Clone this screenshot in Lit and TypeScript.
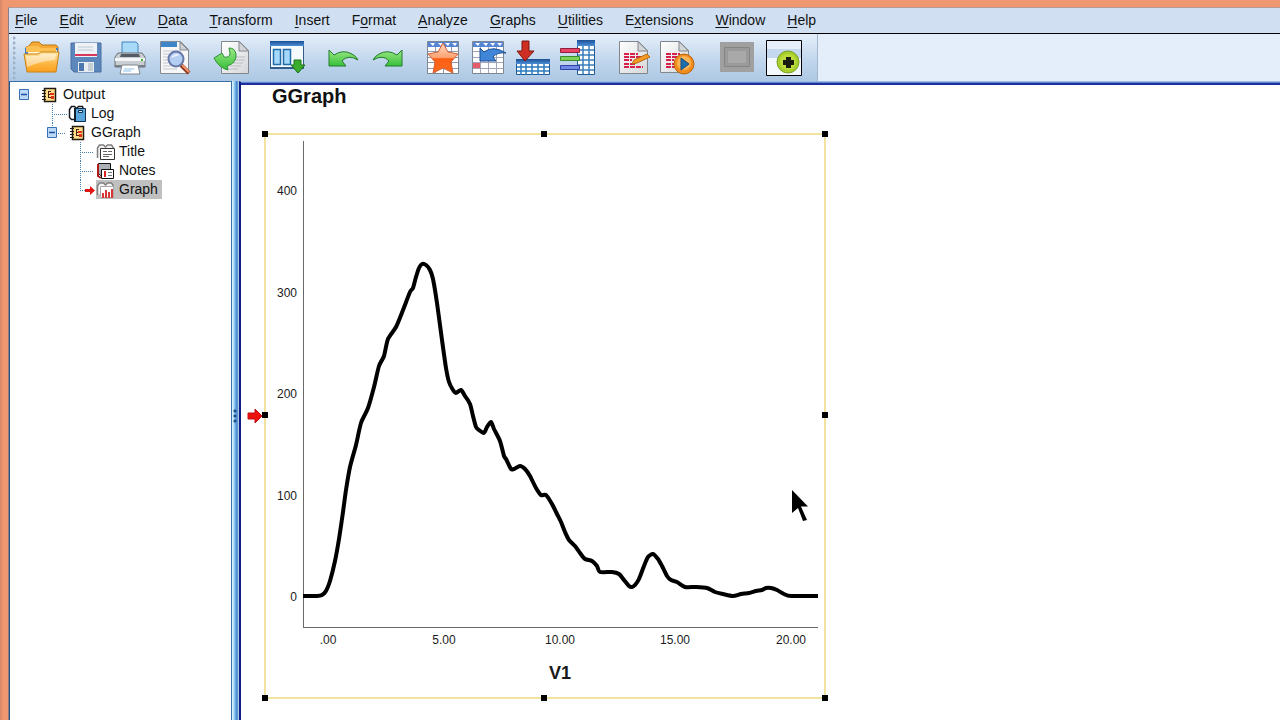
import { LitElement, html, svg, css, nothing } from "lit";
import { customElement, property, state } from "lit/decorators.js";
import { classMap } from "lit/directives/class-map.js";

const toolIcons = {
  open: svg`
    <path d="M3 11 V7 l3-1 3-4 h7 l3 3 h14 l2 2 v7z" fill="#f6a935" stroke="#b87514"/>
    <path d="M2 8 h33 v6 h-33z" fill="#3f7fc8"/>
    <path d="M5 10 h29 v8 h-29z" fill="#fff3d8"/>
    <path d="M3 12 V7 l3-1 h9 l3 2 h15 v4z" fill="#fbbf52"/>
    <path d="M1 14 h14 l3-2 h18 l-3 20 h-29z" fill="url(#gold)" stroke="#c98315"/>
    <path d="M3 16 h12 l4-2 h14 l-1 6 q-14 1-28 7z" fill="#fff" opacity=".45"/>`,
  save: svg`
    <path d="M3 3 h30 v29 h-27 l-3-3z" fill="#5c87bd" stroke="#4a6f9f"/>
    <path d="M7 3 h22 v14 h-22z" fill="#eef2f6"/>
    <path d="M10 7 h15 M10 10 h15" stroke="#bcc8d4"/>
    <path d="M7 14 h22 v2 h-22z" fill="#d8365a"/>
    <path d="M10 22 h16 v10 h-16z" fill="#e9edf2"/>
    <path d="M11 23 h5 v8 h-5z" fill="#4c78ad"/>
    <path d="M20 23 h5 v8 h-5z" fill="#c4ccd4"/>`,
  print: svg`
    <path d="M9 16 V2 h14 l2 2 v12z" fill="#a9d9f8" stroke="#3f86c0"/>
    <path d="M5 13 h24 l3 4 v10 h-30 v-10z" fill="#c9ced3" stroke="#686e75"/>
    <path d="M8 14 h18 l1 3 h-20z" fill="#555c64"/>
    <path d="M2 18 h30 v3 h-30z" fill="#f4f6f8"/>
    <path d="M2 25 h30 v2 h-30z" fill="#787f87"/>
    <path d="M28 19 h2 v2 h-2z" fill="#42b030"/>
    <path d="M9 25 h16 l2 9 h-20z" fill="#fff" stroke="#80878f"/>
    <path d="M11 29 h10 M10 31 h8" stroke="#8fc0e6"/>`,
  preview: svg`
    <path d="M2.500 1.500 h20 l8 8 v24 h-28z" fill="#f7f7f7" stroke="#868b91"/>
    <path d="M3 2 h16 v5 h-16z" fill="#3f86c8"/>
    <path d="M22 2 v8 h8z" fill="#cdd0d4" stroke="#868b91"/>
    <path d="M5 11 h18 M5 14 h10 M5 17 h6 M5 20 h5 M5 23 h5 M5 26 h8 M5 29 h14" stroke="#c3c8cd"/>
    <path d="M23 25 l8 8" stroke="#8d3a20" stroke-width="4"/>
    <path d="M24 25 l7 7" stroke="#f0936a" stroke-width="2"/>
    <circle cx="18" cy="19" r="7.500" fill="#b4cdf2" stroke="#6878a8" stroke-width="2"/>
    <path d="M13 18 a6 6 0 0 1 9-3z" fill="#fff" opacity=".7"/>`,
  exporting: svg`
    <path d="M7.500 1.500 h18 l9 9 v23 h-27z" fill="url(#paper)" stroke="#83878c"/>
    <path d="M25 1.500 v9.500 h9.500z" fill="#d3d5d8" stroke="#83878c"/>
    <path d="M17 17 h14 M17 20 h14 M17 23 h12 M14 26 h13 M12 29 h12" stroke="#b9bdc1"/>
    <path d="M0 18 L8 13 l2 4 q6 1 6-4 l-1-5 q6 0 7 6 q1 9-9 12 l1 4 q-9-2-14-12z" fill="url(#leaf)" stroke="#2f9136"/>`,
  recall: svg`
    <path d="M.5 1.500 h33 v27 h-33z" fill="#f5faff" stroke="#335d8c"/>
    <path d="M0 1 h34 v5 h-34z" fill="url(#navy)"/>
    <path d="M0 28 h34" stroke="#335d8c" stroke-width="2"/>
    <path d="M3.500 9.500 h7 v15 h-7z M13.500 9.500 h7 v15 h-7z" fill="#a5d8fa" stroke="#206ca8" stroke-width="1.500"/>
    <path d="M24 20 h7 v5 h4 l-7 8 -7-8 h3z" fill="#3aae2c" stroke="#1c701a"/>`,
  undo: svg`
    <path d="M4 10 l5 5 q9-6 18-1 q4 2 6 6 q-10-6-16 1 l4 5 h-17z" fill="url(#leaf)" stroke="#237a2c"/>`,
  redo: svg`
    <path d="M32 10 l-5 5 q-9-6-18-1 q-4 2-6 6 q10-6 16 1 l-4 5 h17z" fill="url(#leaf)" stroke="#237a2c"/>`,
  star: svg`
    <path d="M2.500 1.500 h31 v32 h-31z" fill="#fff" stroke="#7d8790"/>
    <path d="M3 2 h30 v5 h-30z" fill="#5685d4"/>
    <path d="M5 3 h5 l-2 3z M13 3 h5 l-2 3z M20 3 h5 l-2 3z M27 3 h5 l-2 3z" fill="#fff"/>
    <path d="M10.500 7 v26 M18.500 7 v26 M26.500 7 v26 M3 11.500 h30 M3 17.500 h30 M3 22.500 h30 M3 28.500 h30" stroke="#9098b0"/>
    <path d="M18 3 l5 9 10 2 -7 8 2 11 -10-5 -10 5 2-11 -7-8 10-2z" fill="url(#ember)" stroke="#d0613a"/>`,
  goto: svg`
    <path d="M2.500 1.500 h31 v32 h-31z" fill="#fff" stroke="#7d8790"/>
    <path d="M3 2 h30 v5 h-30z" fill="#5685d4"/>
    <path d="M5 3 h5 l-2 3z M13 3 h5 l-2 3z M20 3 h5 l-2 3z M27 3 h5 l-2 3z" fill="#fff"/>
    <path d="M10.500 7 v26 M18.500 7 v26 M26.500 7 v26 M3 11.500 h30 M3 17.500 h30 M3 22.500 h30 M3 28.500 h30" stroke="#a3a6ba"/>
    <path d="M3 23 h7 v5 h-7z" fill="#e65a6a"/>
    <path d="M10 8 l4 4 q9-7 22 1 q-9-1-13 4 l3 4 h-16z" fill="#3f86d8" stroke="#1f4f93"/>`,
  insertCase: svg`
    <path d="M1.500 19.500 h33 v15 h-33z" fill="#fff" stroke="#1f5c96"/>
    <path d="M1 19 h34 v5 h-34z" fill="url(#navy)"/>
    <path d="M6 24 v11 M11 24 v11 M17 24 v11 M23 24 v11 M29 24 v11 M2 27 h32 M2 31 h32" stroke="#2c7bc0" stroke-width="1.500"/>
    <path d="M7 1 h7 v10 h5 l-9 10 -8-10 h5z" fill="#cf2e22" stroke="#7d1612"/>`,
  insertVar: svg`
    <path d="M17.500 .5 h17 v34 h-17z" fill="#fff" stroke="#1f5c96"/>
    <path d="M17 0 h18 v6 h-18z" fill="url(#navy)"/>
    <path d="M23 6 v28 M29 6 v28 M18 10 h16 M18 15 h16 M18 20 h16 M18 25 h16 M18 30 h16" stroke="#3d7fbd" stroke-width="1.500"/>
    <path d="M.5 8.500 h19 v4 h-19z" fill="#ea4468" stroke="#8f2038"/>
    <path d="M.5 16.500 h19 v4 h-19z" fill="#7bd256" stroke="#3b8c2d"/>
    <path d="M.5 25.500 h19 v4 h-19z" fill="#7089e6" stroke="#2e429f"/>`,
  editDoc: svg`
    <path d="M3.500 1.500 h19 l9 9 v23 h-28z" fill="url(#paper)" stroke="#83878c"/>
    <path d="M22 1.500 v9.500 h9.500z" fill="#d3d5d8" stroke="#83878c"/>
    <path d="M8 14 h14 M8 17 h17 M8 20 h8 M8 24 h12 M8 27 h19" stroke="#d6214b" stroke-width="2" stroke-dasharray="5 1"/>
    <path d="M16 24 l2-4 13-6 3 3 -13 6z" fill="#f59a22" stroke="#b8690e"/>`,
  runDoc: svg`
    <path d="M-.5 1.500 h19 l9 9 v22 h-28z" fill="url(#paper)" stroke="#83878c"/>
    <path d="M18 1.500 v9.500 h9.500z" fill="#d3d5d8" stroke="#83878c"/>
    <path d="M5 14 h14 M5 17 h11 M5 20 h8 M5 24 h8 M5 27 h9" stroke="#d6214b" stroke-width="2" stroke-dasharray="5 1"/>
    <circle cx="23" cy="24" r="10" fill="#f28c1c" stroke="#b9650c"/>
    <circle cx="23" cy="23" r="7" fill="#f9b457"/>
    <path d="M20 18 l8 6 -8 6z" fill="#1d6fae" stroke="#134a78"/>`,
  designate: svg`
    <path d="M1 2 h34 v30 h-34z" fill="#a0a0a0"/>
    <path d="M5.500 7.500 h25 v19 h-25z" fill="#9a9a9a" stroke="#858585"/>
    <path d="M9 11 h18 v12 h-18z" fill="#a9a9a9"/>`,
  addNew: svg`
    <path d="M.5.5 h35 v35 h-35z" fill="#f4f9ff" stroke="#000"/>
    <path d="M1 1 h34 v8 h-34z" fill="#e6effa"/>
    <path d="M1 9 h34 v9 h-34z" fill="#c4d8ef"/>
    <circle cx="22" cy="22" r="11" fill="#a6ce2c" stroke="#7d9f2b"/>
    <circle cx="22" cy="22" r="8" fill="#bcdc3c"/>
    <path d="M20 17 h5 v3 h3 v5 h-3 v3 h-5 v-3 h-3 v-5 h3z" fill="#1a1c10"/>`,
};

const treeIcons = {
  book: svg`
    <path d="M4.500 2.500 h11 v13 h-11z" fill="#ffe08a" stroke="#221a10" stroke-width="1.500"/>
    <path d="M2 4.500 h4 M2 7.500 h4 M2 10.500 h4 M2 13.500 h4" stroke="#221a10"/>
    <path d="M8.500 5 v7 M8 5.500 h3 M8 8.500 h3 M8 11.500 h3" stroke="#4b1c10" fill="none"/>
    <path d="M10 7 h4 v2 h-4z M11 10 h3 v3 h-3z" fill="#e03018"/>`,
  log: svg`
    <path d="M1.500 4.500 l2-3 h3 l2 2 2-2 h4 l1 3 v10 h-12 l-2-2z" fill="#fff" stroke="#151a20" stroke-width="1.500"/>
    <path d="M7.500 3.500 h10 v13 h-10z" fill="#5aa7de" stroke="#12304c"/>
    <path d="M7 3 v14" stroke="#12202c" stroke-width="2"/>
    <path d="M10.500 5.500 h4 v2 h-4z" fill="#d5efff" stroke="#12304c"/>`,
  title: svg`
    <path d="M1.500 15 v-10 l2-3 h4 l2 2 2-2 h4 l2 3" fill="#f2f2f2" stroke="#808080" stroke-width="1.500"/>
    <path d="M4.500 5.500 h14 v11 h-14z" fill="#fff" stroke="#333"/>
    <path d="M7 8.500 h4 M12 8.500 h4 M7 11.500 h9 M7 13.500 h6" stroke="#666"/>`,
  notes: svg`
    <path d="M2.500 1.500 h12 v12 h-10 l-2-2z" fill="#aab0b6" stroke="#111"/>
    <path d="M2 2 v12 l3 2" stroke="#b01c1c" stroke-width="2" fill="none"/>
    <path d="M5.500 7.500 h12 v9 h-12z" fill="#fff" stroke="#111"/>
    <path d="M12 10.500 h4 M12 13.500 h4" stroke="#777"/>
    <path d="M8 9 h2 v6 h-2z" fill="#e02020"/>`,
  graph: svg`
    <path d="M1.500 14 v-9 l2-3 h4 l2 2 2-2 h4 l2 3" fill="#f5f5f5" stroke="#808080" stroke-width="1.500"/>
    <path d="M4.500 5.500 h13 v11 h-13z" fill="#fff" stroke="#aaa"/>
    <path d="M6 12 h2 v5 h-2z M9 9 h2 v8 h-2z M12 11 h2 v6 h-2z M15 8 h2 v9 h-2z" fill="#d63636"/>`,
};

type ToolName = keyof typeof toolIcons;
type TreeName = keyof typeof treeIcons;

interface ToolGroup {
  kind: string;
  tools: [ToolName, string][];
}

const toolGroups: ToolGroup[] = [
  { kind: "first", tools: [["open", "Open"], ["save", "Save"], ["print", "Print"], ["preview", "Print preview"]] },
  { kind: "", tools: [["exporting", "Export"]] },
  { kind: "", tools: [["recall", "Recall dialog"]] },
  { kind: "near", tools: [["undo", "Undo"], ["redo", "Redo"]] },
  { kind: "near", tools: [["star", "Go to data"], ["goto", "Go to case"], ["insertCase", "Insert case"], ["insertVar", "Insert variable"]] },
  { kind: "", tools: [["editDoc", "Edit script"], ["runDoc", "Run script"]] },
  { kind: "loose", tools: [["designate", "Designate window"], ["addNew", "Add"]] },
];

@customElement("tool-bar")
export class ToolBar extends LitElement {
  static styles = css`
    :host { display: flex; height: 47px; background: #e3eefa; }
    .strip {
      display: flex; align-items: center; padding-right: 15px;
      background: linear-gradient(#e4eefa, #bfd5ec 60%, #adc8e4);
      border-right: 1px solid #a3b8cf;
    }
    .grip {
      width: 3px; height: 43px; margin: 0 7px 0 4px;
      background: radial-gradient(circle at 1px 2px, #9fb1c6 1px, transparent 2px) 0 0 / 3px 5px;
    }
    .group { display: flex; gap: 9px; margin-left: 20px; }
    .first { margin-left: 0; }
    .near { margin-left: 19px; }
    .loose { gap: 11px; margin-left: 22px; }
    .tool { display: block; width: 36px; height: 36px; padding: 0; border: 0; background: none; }
    .icon { display: block; width: 36px; height: 36px; overflow: visible; }
  `;

  private gradients() {
    return svg`
      <linearGradient id="gold" x2="0" y2="1"><stop stop-color="#ffe7a6"/><stop offset=".6" stop-color="#fdb540"/><stop offset="1" stop-color="#f8a01e"/></linearGradient>
      <linearGradient id="paper" x2="1" y2="1"><stop stop-color="#fff"/><stop offset="1" stop-color="#d4d6d9"/></linearGradient>
      <linearGradient id="leaf" x2="0" y2="1"><stop stop-color="#9be884"/><stop offset="1" stop-color="#37c03a"/></linearGradient>
      <linearGradient id="navy" x2="0" y2="1"><stop stop-color="#1c4f94"/><stop offset="1" stop-color="#4b8fd6"/></linearGradient>
      <linearGradient id="ember" x2="0" y2="1"><stop stop-color="#ffd9c0"/><stop offset=".5" stop-color="#ffa070"/><stop offset=".52" stop-color="#fb5f14"/><stop offset="1" stop-color="#fb6a1c"/></linearGradient>`;
  }

  render() {
    return html`
      <div class="strip" role="toolbar" aria-label="Output tools">
        <span class="grip"></span>
        ${toolGroups.map(
          (group) => html`<div class=${`group ${group.kind}`}>
            ${group.tools.map(
              ([name, label]) => html`<button class="tool" aria-label=${label}>
                <svg class="icon" viewBox="0 0 36 36" aria-hidden="true">
                  <defs>${this.gradients()}</defs>
                  ${toolIcons[name]}
                </svg>
              </button>`
            )}
          </div>`
        )}
      </div>
    `;
  }
}

interface Row {
  label: string;
  icon: TreeName;
  level: number;
  branch: boolean;
  last: boolean;
}

const rows: Row[] = [
  { label: "Output", icon: "book", level: 0, branch: true, last: true },
  { label: "Log", icon: "log", level: 1, branch: false, last: false },
  { label: "GGraph", icon: "book", level: 1, branch: true, last: true },
  { label: "Title", icon: "title", level: 2, branch: false, last: false },
  { label: "Notes", icon: "notes", level: 2, branch: false, last: false },
  { label: "Graph", icon: "graph", level: 2, branch: false, last: true },
];

@customElement("outline-tree")
export class OutlineTree extends LitElement {
  static styles = css`
    :host { display: block; padding-top: 3px; color: #111; }
    .rows { margin: 0; padding: 0; list-style: none; }
    .row { display: flex; height: 19px; }
    .indent { width: 28px; }
    .joint { display: block; width: 30px; height: 19px; overflow: visible; }
    .item {
      display: flex; align-items: center; gap: 3px; height: 19px; padding: 0 4px 0 0;
      border: 0; background: none; color: inherit; font: 14px/19px "Liberation Sans", Arial, sans-serif;
    }
    .selected { background: #c0c0c0; }
    .icon { display: block; width: 20px; height: 18px; }
  `;

  @state() private selected = "Graph";

  private joint(row: Row, active: boolean) {
    return svg`
      ${row.level > 0
        ? svg`<path d=${`M14.5 0 V${row.last ? 10 : 19} M14 10.500 H${row.level === 1 && !row.branch ? 30 : 28}`}
            stroke="#4682b4" stroke-dasharray="1 1" fill="none"/>`
        : nothing}
      ${row.branch
        ? svg`<path d="M9.500 4.500 h9 v10 h-9z" fill="#bcd9f7" stroke="#3670b4"/><path d="M11 9.500 h6" stroke="#1c5098" stroke-width="1.500"/>`
        : nothing}
      ${active ? svg`<path d="M19 9 h5 v-3 l5 4.500 -5 4.500 v-3 h-5z" fill="#e01414"/>` : nothing}`;
  }

  render() {
    return html`<ul class="rows" role="tree" aria-label="Output outline">
      ${rows.map((row) => {
        const active = row.label === this.selected;
        return html`<li class="row" role="treeitem" aria-selected=${active}>
          ${Array.from({ length: row.level }, () => html`<span class="indent"></span>`)}
          <svg class="joint" viewBox="0 0 30 19" aria-hidden="true">${this.joint(row, active)}</svg>
          <button class=${classMap({ item: true, selected: active })} @click=${() => (this.selected = row.label)}>
            <svg class="icon" viewBox="0 0 20 18" aria-hidden="true">${treeIcons[row.icon]}</svg>${row.label}
          </button>
        </li>`;
      })}
    </ul>`;
  }
}

const curve: [number, number][] = [
  [37, 461], [51, 461], [56, 460], [60, 456], [64, 446], [69, 426], [73, 404], [77, 377], [80, 355], [84, 332],
  [90, 310], [95, 288], [102, 273], [108, 252], [113, 231], [118, 221], [122, 204], [130, 192], [137, 175],
  [144, 157], [147, 153], [150, 142], [153, 133], [156, 129], [160, 130], [164, 135], [167, 144], [171, 168],
  [176, 205], [180, 233], [183, 247], [187, 255], [190, 258], [195, 255], [199, 261], [204, 269], [207, 281],
  [210, 292], [213, 295], [218, 298], [221, 292], [225, 287], [228, 294], [234, 306], [238, 321], [240, 324],
  [245, 334], [248, 334], [254, 331], [259, 334], [264, 341], [270, 353], [275, 360], [280, 360], [286, 369],
  [291, 379], [295, 387], [299, 397], [303, 405], [309, 411], [314, 418], [319, 424], [326, 426], [331, 431],
  [334, 437], [346, 437], [353, 439], [358, 445], [363, 451], [366, 452], [369, 450], [373, 444], [378, 431],
  [382, 422], [387, 419], [392, 424], [396, 431], [401, 441], [405, 445], [411, 447], [419, 452], [430, 452],
  [441, 453], [449, 457], [457, 459], [467, 461], [475, 459], [483, 458], [490, 456], [496, 455], [500, 453],
  [505, 453], [511, 455], [518, 459], [525, 461], [552, 461],
];

function smoothPath(points: [number, number][]): string {
  let d = `M${points[0][0]} ${points[0][1]}`;
  for (let i = 0; i < points.length - 1; i++) {
    const before = points[Math.max(i - 1, 0)];
    const from = points[i];
    const to = points[i + 1];
    const after = points[Math.min(i + 2, points.length - 1)];
    const tension = 8;
    d += ` C${from[0] + (to[0] - before[0]) / tension} ${from[1] + (to[1] - before[1]) / tension}`;
    d += ` ${to[0] - (after[0] - from[0]) / tension} ${to[1] - (after[1] - from[1]) / tension} ${to[0]} ${to[1]}`;
  }
  return d;
}

@customElement("density-chart")
export class DensityChart extends LitElement {
  static styles = css`
    :host { display: block; position: relative; border: 2px solid #f3e3a0; }
    .plot { display: block; width: 558px; height: 562px; }
    .tick { font: 12px "Liberation Sans", Arial, sans-serif; fill: #1a1a1a; }
    .end { text-anchor: end; }
    .mid { text-anchor: middle; }
    .name { font: bold 18px "Liberation Sans", Arial, sans-serif; fill: #1a1a1a; }
    .axis { stroke: #6a6a6a; shape-rendering: crispEdges; }
    .line { fill: none; stroke: #000; stroke-width: 4; stroke-linejoin: round; }
    .handle { position: absolute; width: 6px; height: 6px; margin: -4px; background: #000; }
    .top { top: 0; }
    .middle { top: 50%; }
    .bottom { bottom: 0; }
    .left { left: 0; }
    .center { left: 50%; }
    .right { right: 0; }
  `;

  @property() name = "V1";

  render() {
    const ticksY = ["0", "100", "200", "300", "400"];
    const ticksX = [".00", "5.00", "10.00", "15.00", "20.00"];
    const handles = ["top left", "top center", "top right", "middle left", "middle right", "bottom left", "bottom center", "bottom right"];
    return html`
      <svg class="plot" viewBox="0 0 558 562" role="img" aria-label="Distribution of V1">
        <path class="axis" d="M37.500 6 V492.500 H552" fill="none"/>
        ${ticksY.map((label, i) => svg`<text class="tick end" x="31" y=${Math.round(466 - i * 101.5)}>${label}</text>`)}
        ${ticksX.map((label, i) => svg`<text class="tick mid" x=${Math.round(62 + i * 115.75)} y="509">${label}</text>`)}
        <path class="line" d=${smoothPath(curve)}/>
        <text class="name mid" x="294" y="544">${this.name}</text>
      </svg>
      ${handles.map((place) => html`<span class=${`handle ${place}`}></span>`)}
    `;
  }
}

const menus: [string, string, string][] = [
  ["", "F", "ile"], ["", "E", "dit"], ["", "V", "iew"], ["", "D", "ata"], ["", "T", "ransform"], ["", "I", "nsert"],
  ["F", "o", "rmat"], ["", "A", "nalyze"], ["", "G", "raphs"], ["", "U", "tilities"], ["E", "x", "tensions"],
  ["", "W", "indow"], ["", "H", "elp"],
];

@customElement("app-root")
export class AppRoot extends LitElement {
  static styles = css`
    :host {
      display: flex; flex-direction: column; box-sizing: border-box; height: 100vh; overflow: hidden;
      padding: 7px 0 0 8px; background: linear-gradient(90deg, #d88a6a 1px, #ee9770 3px);
      font-family: "Liberation Sans", Arial, sans-serif;
    }
    .window { display: flex; flex-direction: column; flex: 1; min-height: 0; border-left: 1px solid #8d7f86; border-top: 1px solid #b99a92; }
    .menus { display: flex; gap: 22px; padding-left: 6px; height: 25px; background: #d0e0f2; border-bottom: 1px solid #000; }
    .menu { padding: 0; border: 0; background: none; color: #111; font: 14px/25px "Liberation Sans", Arial, sans-serif; }
    .key { text-decoration: underline; text-underline-offset: 2px; }
    .panes { display: flex; flex: 1; min-height: 0; background: #fff; }
    .outline { flex: 0 0 221px; border: 1px solid #3b6fa8; border-left-color: #2c4f7c; border-bottom: 0; }
    .splitter {
      display: flex; align-items: center; flex: 0 0 7px;
      background: linear-gradient(90deg, #d4f0fb 1px, #9cd0f2 2px, #5c9fdc 4px, #3f7fc6 5px, #cfe0f4 7px);
    }
    .dots { width: 5px; height: 16px; margin-top: 30px; background: radial-gradient(circle at 3px 3px, #1f4f86 1px, transparent 2px) 0 0 / 5px 5px; }
    .output { flex: 1; min-width: 0; overflow: hidden; border-left: 2px solid #0e1c86; border-top: 1px solid #9dbbe2; box-shadow: inset 0 1px #5f86cf, inset 0 3px #1c2f9c; }
    .heading { margin: 0; padding: 3px 0 0 31px; font-size: 20px; line-height: 22px; color: #111; }
    .result { display: flex; align-items: center; gap: 1px; padding: 26px 0 0 6px; }
    .marker { display: block; width: 16px; height: 16px; }
    .pointer { position: absolute; left: 791px; top: 490px; width: 18px; height: 34px; }
  `;

  render() {
    return html`
      <div class="window">
        <nav class="menus" aria-label="Main menu">
          ${menus.map(([before, key, after]) => html`<button class="menu">${before}<span class="key">${key}</span>${after}</button>`)}
        </nav>
        <tool-bar></tool-bar>
        <main class="panes">
          <aside class="outline"><outline-tree></outline-tree></aside>
          <div class="splitter"><span class="dots"></span></div>
          <section class="output">
            <h1 class="heading">GGraph</h1>
            <div class="result">
              <svg class="marker" viewBox="0 0 16 16" aria-hidden="true"><path d="M1 5 h7 v-4 l7 7 -7 7 v-4 h-7z" fill="#ee0f0f" stroke="#c01010"/></svg>
              <density-chart></density-chart>
            </div>
          </section>
        </main>
      </div>
      <svg class="pointer" viewBox="0 0 18 34" aria-hidden="true">
        <path d="M1 0 L17 16.500 H10 L16 30 L12 31 L7 18 L1 23z" fill="#000"/>
      </svg>
    `;
  }
}
